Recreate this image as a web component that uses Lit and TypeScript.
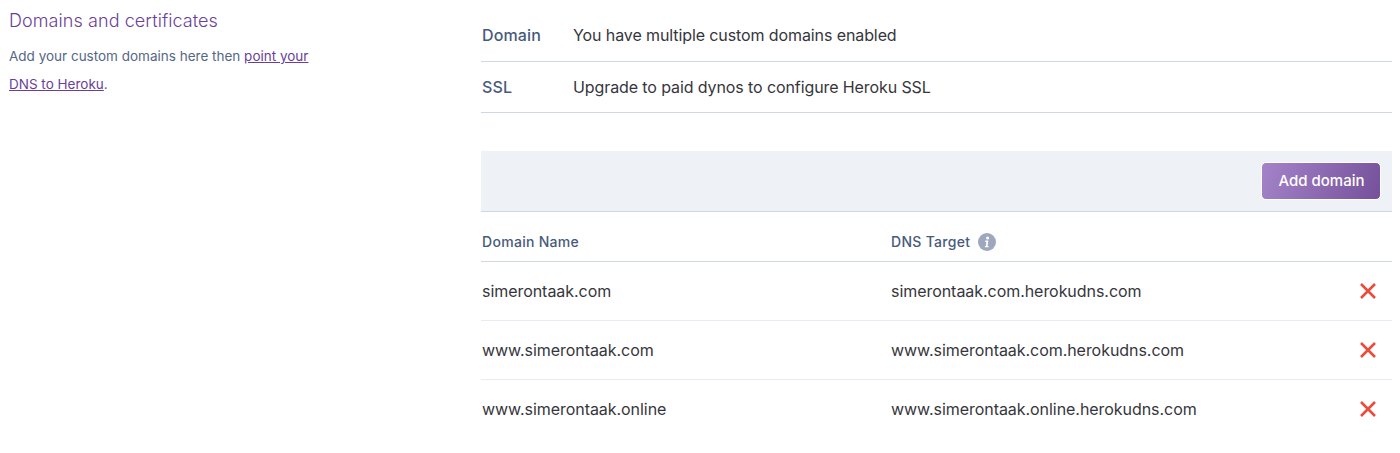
import { LitElement, html, css } from 'lit';
import { customElement } from 'lit/decorators.js';

const rows = [
  ['simerontaak.com', 'simerontaak.com.herokudns.com'],
  ['www.simerontaak.com', 'www.simerontaak.com.herokudns.com'],
  ['www.simerontaak.online', 'www.simerontaak.online.herokudns.com'],
];

@customElement('app-root')
export class AppRoot extends LitElement {
  static styles = css`
    :host {
      display: block;
      height: 453px;
      overflow: hidden;
      background: #fff;
      font-family: Inter, 'Open Sans', sans-serif;
      color: #35363c;
    }

    .page {
      display: grid;
      grid-template-columns: 481px 911px;
    }

    .intro {
      padding: 9px 0 0 9px;
    }

    h2 {
      margin: 0;
      font-size: 18px;
      font-weight: 300;
      line-height: 24px;
      letter-spacing: 0.08px;
      color: #6a4199;
    }

    .intro p {
      margin: 9px 0 0;
      width: 310px;
      font-size: 13.5px;
      font-weight: 400;
      line-height: 28px;
      color: #546786;
    }

    .intro a {
      color: #6a3f9a;
    }

    .summary-row {
      display: flex;
      align-items: center;
      height: 50px;
      border-bottom: 1px solid #cfd7e6;
      font-size: 16px;
    }

    .summary-row:first-child {
      height: 62px;
      padding-bottom: 2px;
      padding-top: 10px;
      box-sizing: border-box;
    }

    .summary-row b {
      width: 92px;
      padding-left: 1px;
      margin-right: -1px;
      font-weight: 500;
      letter-spacing: 0.15px;
      color: #475a7c;
    }

    .summary-row span {
      letter-spacing: -0.1px;
    }

    .band {
      display: flex;
      justify-content: flex-end;
      align-items: center;
      height: 60px;
      margin-top: 38px;
      padding-right: 11px;
      background: #eef1f6;
      border-bottom: 1px solid #cfd7e6;
    }

    button {
      width: 120px;
      height: 38px;
      padding: 0 0 2px 1px;
      border: 1px solid #fff;
      border-radius: 5px;
      background: linear-gradient(110deg, #a583c9, #74519a);
      color: #fff;
      font: 500 15px Inter, sans-serif;
    }

    .grid-row {
      display: grid;
      grid-template-columns: 410px 1fr 33px;
      align-items: center;
      height: 58px;
      padding-left: 1px;
      font-size: 16px;
      letter-spacing: -0.05px;
      border-bottom: 1px solid #e7ebf3;
    }

    .grid-row > :nth-child(2) {
      margin-left: -1px;
    }

    .grid-row:last-child {
      border-bottom: 0;
    }

    .grid-row.head {
      height: 50px;
      padding-top: 10px;
      box-sizing: border-box;
      font-size: 14px;
      font-weight: 500;
      letter-spacing: 0.3px;
      color: #475a7c;
      border-bottom: 1px solid #cfd7e6;
    }

    .target {
      display: flex;
      align-items: center;
      gap: 8px;
    }

    .info {
      margin-top: 1px;
    }

    svg {
      display: block;
    }
  `;

  render() {
    return html`
      <div class="page">
        <section class="intro">
          <h2>Domains and certificates</h2>
          <p>Add your custom domains here then <a href="#">point your DNS to Heroku</a>.</p>
        </section>
        <section>
          <div class="summary-row"><b>Domain</b><span>You have multiple custom domains enabled</span></div>
          <div class="summary-row"><b>SSL</b><span>Upgrade to paid dynos to configure Heroku SSL</span></div>
          <div class="band"><button>Add domain</button></div>
          <div class="grid-row head">
            <span>Domain Name</span>
            <span class="target">DNS Target
              <svg class="info" width="18" height="18" viewBox="0 0 18 18">
                <circle cx="9" cy="9" r="9" fill="#9da8bf"></circle>
                <circle cx="9.6" cy="4.9" r="1.5" fill="#fff"></circle>
                <path d="M7.3 7.6h3.1l-.9 5.4h1.1v1.3H6.9v-1.3h.9l.6-4.1H7.2z" fill="#fff"></path>
              </svg>
            </span>
            <span></span>
          </div>
          ${rows.map(([name, target]) => html`
            <div class="grid-row">
              <span>${name}</span>
              <span>${target}</span>
              <svg width="18" height="18" viewBox="0 0 18 18">
                <path d="M2 2l14 14M16 2L2 16" stroke="#e74c3c" stroke-width="2.6" fill="none"></path>
              </svg>
            </div>
          `)}
        </section>
      </div>
    `;
  }
}
